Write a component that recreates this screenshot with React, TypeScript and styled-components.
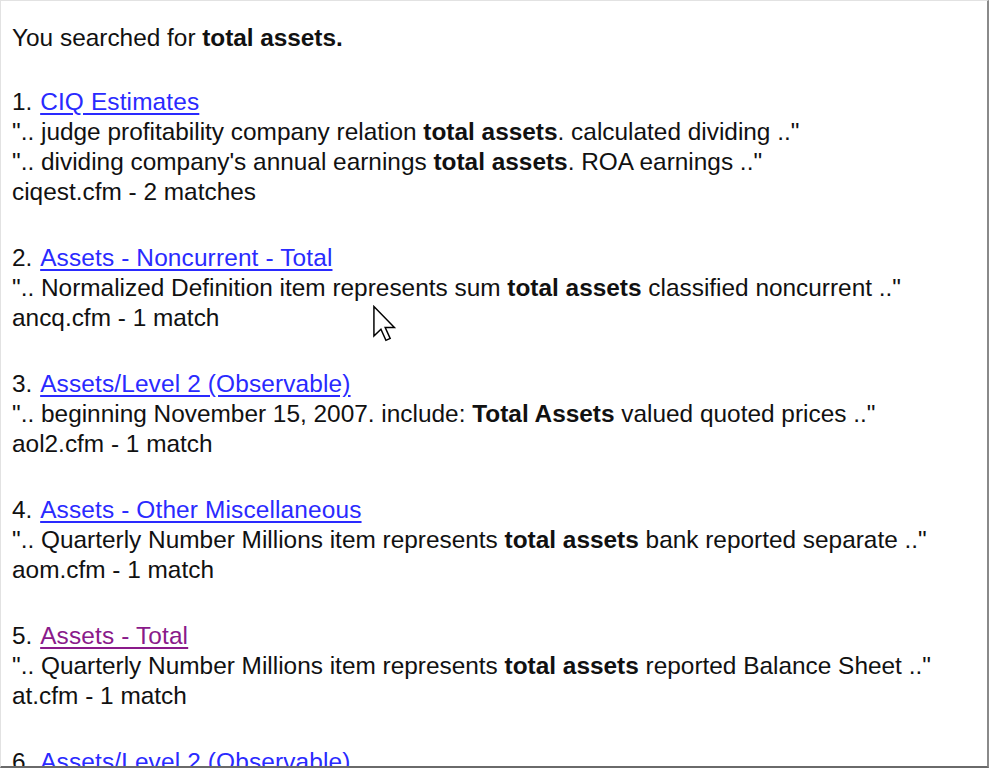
import React from 'react';
import styled, { createGlobalStyle } from 'styled-components';

interface Result {
  title: string;
  visited?: boolean;
  snippets: { before: string; bold: string; after: string }[];
  file: string;
}

const results: Result[] = [
  {
    title: 'CIQ Estimates',
    snippets: [
      { before: 'judge profitability company relation ', bold: 'total assets', after: '. calculated dividing' },
      { before: "dividing company's annual earnings ", bold: 'total assets', after: '. ROA earnings' },
    ],
    file: 'ciqest.cfm - 2 matches',
  },
  {
    title: 'Assets - Noncurrent - Total',
    snippets: [
      { before: 'Normalized Definition item represents sum ', bold: 'total assets', after: ' classified noncurrent' },
    ],
    file: 'ancq.cfm - 1 match',
  },
  {
    title: 'Assets/Level 2 (Observable)',
    snippets: [
      { before: 'beginning November 15, 2007. include: ', bold: 'Total Assets', after: ' valued quoted prices' },
    ],
    file: 'aol2.cfm - 1 match',
  },
  {
    title: 'Assets - Other Miscellaneous',
    snippets: [
      { before: 'Quarterly Number Millions item represents ', bold: 'total assets', after: ' bank reported separate' },
    ],
    file: 'aom.cfm - 1 match',
  },
  {
    title: 'Assets - Total',
    visited: true,
    snippets: [
      { before: 'Quarterly Number Millions item represents ', bold: 'total assets', after: ' reported Balance Sheet' },
    ],
    file: 'at.cfm - 1 match',
  },
  {
    title: 'Assets/Level 2 (Observable)',
    snippets: [],
    file: '',
  },
];

const GlobalStyle = createGlobalStyle`
  html, body {
    margin: 0;
    padding: 0;
    background: #fff;
    overflow: hidden;
  }
`;

const Frame = styled.div`
  position: relative;
  box-sizing: border-box;
  width: 989px;
  height: 768px;
  overflow: hidden;
  border-top: 1px solid #e2e2e2;
  border-left: 1px solid #e2e2e2;
  border-right: 2px solid #8a8a8a;
  border-bottom: 2px solid #6a6a6a;
  padding: 22px 0 0 11px;
  font-family: Arial, 'Liberation Sans', sans-serif;
  font-size: 24.4px;
  line-height: 30px;
  color: #111;
`;

const Heading = styled.div`
  margin-bottom: 34px;
  b {
    letter-spacing: -0.05px;
  }
`;

const Block = styled.div`
  margin-bottom: 36px;
  white-space: nowrap;
`;

const Line = styled.div``;

const Title = styled.a<{ $visited?: boolean }>`
  margin-left: 1px;
  color: ${(p) => (p.$visited ? '#8a1a8a' : '#2a2aff')};
  text-decoration: underline;
  text-underline-offset: 3px;
  letter-spacing: 0.15px;
  cursor: pointer;
`;

const Cursor = styled.svg`
  position: absolute;
  left: 372px;
  top: 304px;
`;

export default function App() {
  return (
    <>
      <GlobalStyle />
      <Frame>
        <Heading>
          You searched for <b>total assets.</b>
        </Heading>
        {results.map((r, i) => (
          <Block key={i}>
            <Line>
              {i + 1}. <Title $visited={r.visited}>{r.title}</Title>
            </Line>
            {r.snippets.map((s, j) => (
              <Line key={j}>
                ".. {s.before}
                <b>{s.bold}</b>
                {s.after} .."
              </Line>
            ))}
            {r.file && <Line>{r.file}</Line>}
          </Block>
        ))}
        <Cursor width="24" height="40" viewBox="0 0 13 21">
          <path
            d="M0.5 0.5 L0.5 16.5 L4.3 12.8 L7 18.8 L9.3 17.8 L6.6 11.9 L11.6 11.9 Z"
            fill="#fff"
            stroke="#000"
            strokeWidth="0.8"
            strokeLinejoin="miter"
          />
        </Cursor>
      </Frame>
    </>
  );
}
